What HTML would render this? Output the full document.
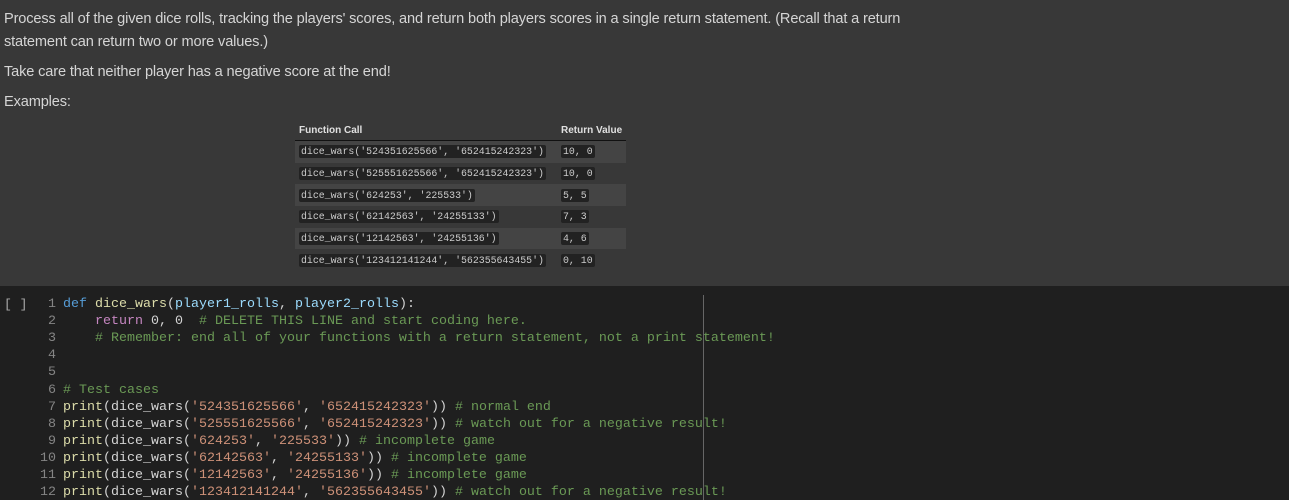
<!DOCTYPE html>
<html><head><meta charset="utf-8"><style>
body{margin:0;width:1289px;height:500px;overflow:hidden;background:#1f1f1f;}
.top{position:absolute;left:0;top:0;width:1289px;height:286px;background:#383838;color:#d5d5d5;font-family:"Liberation Sans",sans-serif;font-size:14.6px;}
.top p{position:absolute;left:4px;margin:0;white-space:nowrap;letter-spacing:-0.15px}
table{position:absolute;left:295px;top:120px;border-collapse:collapse;font-size:10px;}
th{font-family:"Liberation Sans",sans-serif;font-weight:bold;font-size:10px;text-align:left;height:20px;padding:0 4px;border-bottom:1px solid #111;color:#e0e0e0}
td{height:21.7px;padding:0 4px;font-family:"Liberation Mono",monospace;font-size:9.9px;}
tr.a td{background:#444}
td span{background:#222;padding:1px 2px;border-radius:2px;color:#ccc}
.code{position:absolute;left:0;top:289px;width:1289px;height:211px;overflow:hidden;font-family:"Liberation Mono",monospace;font-size:13.33px;color:#d4d4d4}
.ln{position:absolute;left:0;width:56px;text-align:right;color:#858585}
.l{position:absolute;left:63px;white-space:pre}
.k{color:#569cd6}.f{color:#dcdcaa}.p{color:#9cdcfe}.r{color:#c586c0}.s{color:#ce9178}.c{color:#6a9955}
</style></head><body>
<div class="top">
<p style="top:11px">Process all of the given dice rolls, tracking the players' scores, and return both players scores in a single return statement. (Recall that a return</p>
<p style="top:34px">statement can return two or more values.)</p>
<p style="top:64px">Take care that neither player has a negative score at the end!</p>
<p style="top:94px">Examples:</p>
<table>
<tr><th style="width:254px">Function Call</th><th>Return Value</th></tr>
<tr class="a"><td><span>dice_wars('524351625566', '652415242323')</span></td><td><span>10, 0</span></td></tr>
<tr><td><span>dice_wars('525551625566', '652415242323')</span></td><td><span>10, 0</span></td></tr>
<tr class="a"><td><span>dice_wars('624253', '225533')</span></td><td><span>5, 5</span></td></tr>
<tr><td><span>dice_wars('62142563', '24255133')</span></td><td><span>7, 3</span></td></tr>
<tr class="a"><td><span>dice_wars('12142563', '24255136')</span></td><td><span>4, 6</span></td></tr>
<tr><td><span>dice_wars('123412141244', '562355643455')</span></td><td><span>0, 10</span></td></tr>
</table>
</div>
<div style="position:absolute;left:0;top:286px;width:1289px;height:3px;background:#1f1f1f"></div>
<div class="code">
<div style="position:absolute;left:4px;top:8px;color:#aaa;font-size:13px">[ ]</div>
<div style="position:absolute;left:703px;top:6px;width:1px;height:210px;background:#666"></div>
<div class="ln" style="top:8px">1</div><div class="l" style="top:8px"><span class="k">def</span> <span class="f">dice_wars</span>(<span class="p">player1_rolls</span>, <span class="p">player2_rolls</span>):</div>
<div class="ln" style="top:25px">2</div><div class="l" style="top:25px">    <span class="r">return</span> 0, 0  <span class="c"># DELETE THIS LINE and start coding here.</span></div>
<div class="ln" style="top:42px">3</div><div class="l" style="top:42px">    <span class="c"># Remember: end all of your functions with a return statement, not a print statement!</span></div>
<div class="ln" style="top:59px">4</div>
<div class="ln" style="top:76px">5</div>
<div class="ln" style="top:94px">6</div><div class="l" style="top:94px"><span class="c"># Test cases</span></div>
<div class="ln" style="top:111px">7</div><div class="l" style="top:111px"><span class="f">print</span>(dice_wars(<span class="s">'524351625566'</span>, <span class="s">'652415242323'</span>)) <span class="c"># normal end</span></div>
<div class="ln" style="top:128px">8</div><div class="l" style="top:128px"><span class="f">print</span>(dice_wars(<span class="s">'525551625566'</span>, <span class="s">'652415242323'</span>)) <span class="c"># watch out for a negative result!</span></div>
<div class="ln" style="top:145px">9</div><div class="l" style="top:145px"><span class="f">print</span>(dice_wars(<span class="s">'624253'</span>, <span class="s">'225533'</span>)) <span class="c"># incomplete game</span></div>
<div class="ln" style="top:162px">10</div><div class="l" style="top:162px"><span class="f">print</span>(dice_wars(<span class="s">'62142563'</span>, <span class="s">'24255133'</span>)) <span class="c"># incomplete game</span></div>
<div class="ln" style="top:179px">11</div><div class="l" style="top:179px"><span class="f">print</span>(dice_wars(<span class="s">'12142563'</span>, <span class="s">'24255136'</span>)) <span class="c"># incomplete game</span></div>
<div class="ln" style="top:196px">12</div><div class="l" style="top:196px"><span class="f">print</span>(dice_wars(<span class="s">'123412141244'</span>, <span class="s">'562355643455'</span>)) <span class="c"># watch out for a negative result!</span></div>
</div>
</body></html>
